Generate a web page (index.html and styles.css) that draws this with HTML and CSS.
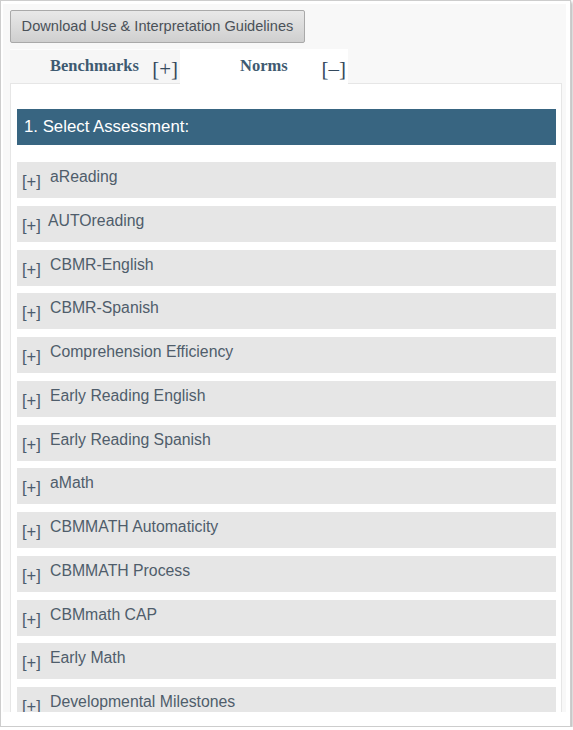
FILE: index.html
```html
<!DOCTYPE html>
<html>
<head>
<meta charset="utf-8">
<link rel="stylesheet" href="styles.css">
</head>
<body>
<div class="frame">
  <div class="view">
    <button class="dl-btn" type="button">Download Use &amp; Interpretation Guidelines</button>
    <div class="tabs">
      <div class="tab tab-bench"><span class="tab-label">Benchmarks</span><span class="tab-icon">[+]</span></div>
      <div class="tab tab-norms active"><span class="tab-label">Norms</span><span class="tab-icon">[–]</span></div>
    </div>
    <div class="panel">
      <div class="panel-head">1. Select Assessment:</div>
      <ul class="list">
        <li class="item"><span class="exp">[+]</span><span class="name">aReading</span></li>
        <li class="item"><span class="exp">[+]</span><span class="name name-tight">AUTOreading</span></li>
        <li class="item"><span class="exp">[+]</span><span class="name">CBMR-English</span></li>
        <li class="item"><span class="exp">[+]</span><span class="name">CBMR-Spanish</span></li>
        <li class="item"><span class="exp">[+]</span><span class="name">Comprehension Efficiency</span></li>
        <li class="item"><span class="exp">[+]</span><span class="name">Early Reading English</span></li>
        <li class="item"><span class="exp">[+]</span><span class="name">Early Reading Spanish</span></li>
        <li class="item"><span class="exp">[+]</span><span class="name">aMath</span></li>
        <li class="item"><span class="exp">[+]</span><span class="name">CBMMATH Automaticity</span></li>
        <li class="item"><span class="exp">[+]</span><span class="name">CBMMATH Process</span></li>
        <li class="item"><span class="exp">[+]</span><span class="name">CBMmath CAP</span></li>
        <li class="item"><span class="exp">[+]</span><span class="name">Early Math</span></li>
        <li class="item"><span class="exp">[+]</span><span class="name">Developmental Milestones</span></li>
      </ul>
    </div>
  </div>
</div>
</body>
</html>
```
FILE: styles.css
```css
html, body {
  margin: 0;
  padding: 0;
  background: #ffffff;
}

.frame {
  width: 571px;
  height: 727px;
  box-sizing: border-box;
  border: 1px solid #cdcdcd;
  box-shadow: 1px 2px 3px rgba(0, 0, 0, 0.35);
  padding: 3px 4px 14px 2px;
  background: #ffffff;
}

.view {
  height: 100%;
  box-sizing: border-box;
  overflow: hidden;
  background: #f8f8f8;
  padding: 6px 4px 0 7px;
  font-family: "Liberation Sans", Arial, sans-serif;
}

.dl-btn {
  display: block;
  width: 295px;
  height: 33px;
  margin: 0;
  padding: 0 0 2px 0;
  border: 1px solid #a9a9a9;
  border-radius: 2px;
  background: linear-gradient(#e8e8e8, #cfcfcf);
  font-family: "Liberation Sans", Arial, sans-serif;
  font-size: 14.6px;
  color: #4a5158;
  text-align: center;
}

.tabs {
  display: flex;
  margin-top: 6px;
  border-bottom: 1px solid #e6e6e6;
  height: 34px;
}

.tab {
  display: flex;
  align-items: center;
  justify-content: space-between;
  box-sizing: border-box;
  height: 34px;
  font-family: "Liberation Serif", "Times New Roman", serif;
  color: #3e5a71;
}

.tab-bench {
  width: 170px;
  padding: 0 2px 0 40px;
  background: #f6f6f6;
  border-top: 1px solid #fdfdfd;
}

.tab-norms {
  width: 168px;
  padding: 0 2px 0 60px;
  background: #ffffff;
  height: 35px;
  margin-bottom: -1px;
}

.tab-label {
  font-weight: bold;
  font-size: 16.5px;
  margin-top: -1px;
}

.tab-icon {
  font-size: 21px;
  color: #34495d;
  margin-top: 5px;
}

.panel {
  background: #ffffff;
  border-left: 1px solid #e6e6e6;
  border-right: 1px solid #e6e6e6;
  padding: 25px 5px 0 6px;
  height: 700px;
}

.panel-head {
  height: 36px;
  box-sizing: border-box;
  background: #386581;
  color: #ffffff;
  font-size: 16.8px;
  padding: 8px 0 0 7px;
}

.list {
  list-style: none;
  margin: 17px 0 0 0;
  padding: 0;
}

.item {
  display: flex;
  align-items: flex-start;
  height: 36px;
  box-sizing: border-box;
  margin-bottom: 7.75px;
  padding: 6px 0 0 5px;
  background: #e6e6e6;
  color: #4f5d6b;
  font-size: 15.8px;
}

.exp {
  color: #4a5c6e;
  font-size: 16.5px;
  margin-top: 4px;
  width: 18px;
}

.name {
  margin-left: 10px;
}

.name-tight {
  margin-left: 8px;
}
```
